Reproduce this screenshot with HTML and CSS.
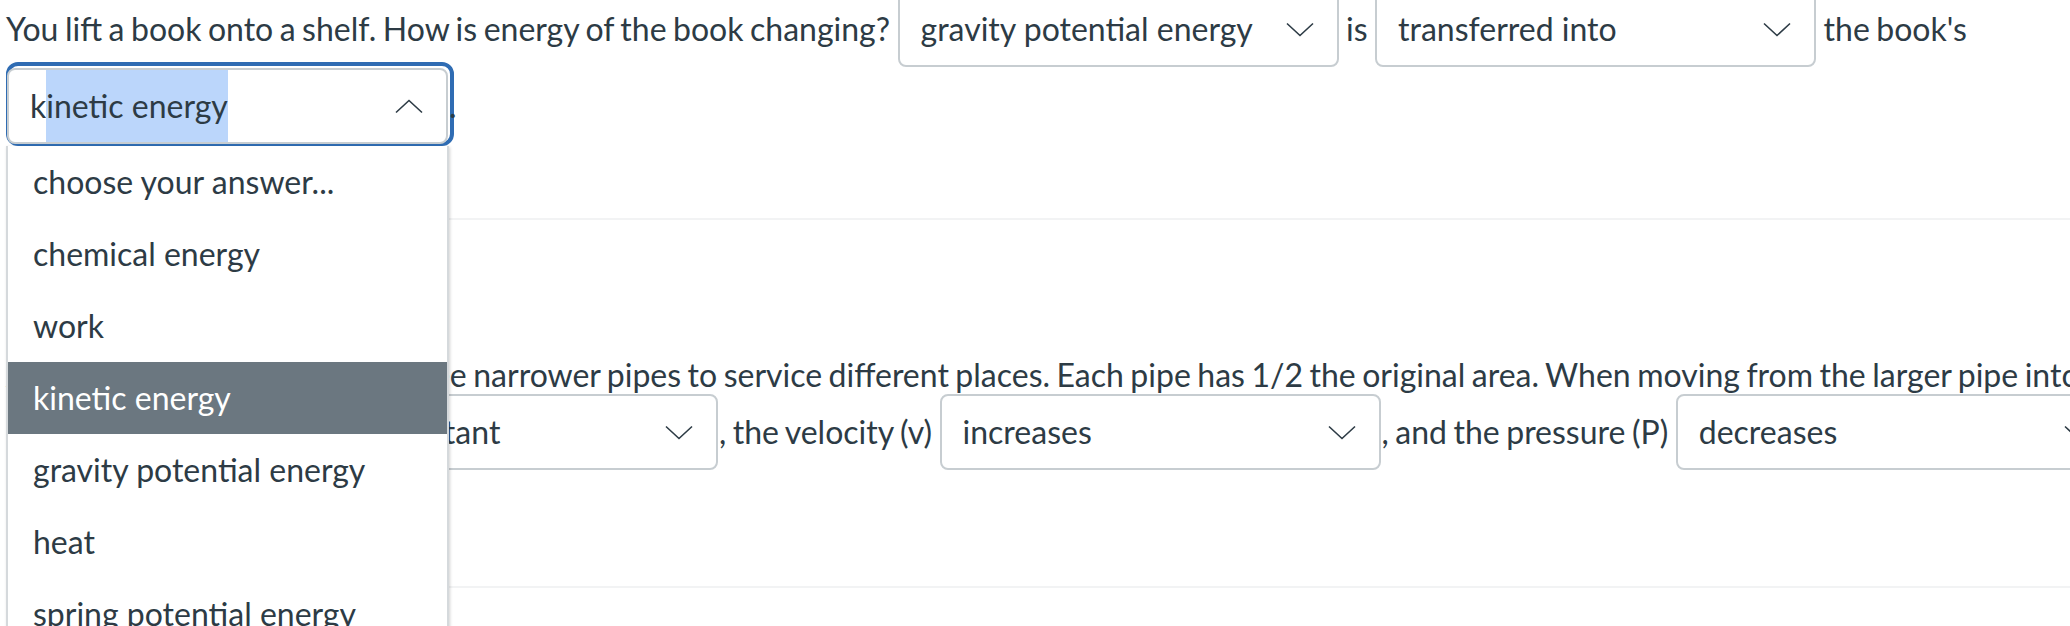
FILE: index.html
```html
<!DOCTYPE html>
<html lang="en">
<head>
<meta charset="utf-8">
<title>Quiz</title>
<link rel="stylesheet" href="styles.css">
</head>
<body>
<div class="page">
  <div class="question q1">
    <div class="qtext">You lift a book onto a shelf. How is energy of the book changing? <div class="select"><span class="value">gravity potential energy</span><svg class="chev" viewBox="0 0 28 15" width="28" height="15"><polyline points="1,1.5 14,13.5 27,1.5"/></svg></div> is <div class="select"><span class="value">transferred into</span><svg class="chev" viewBox="0 0 28 15" width="28" height="15"><polyline points="1,1.5 14,13.5 27,1.5"/></svg></div> the book's <div class="select focused"><span class="value">k<span class="hl">inetic energy</span></span><svg class="chev" viewBox="0 0 28 15" width="28" height="15"><polyline points="1,13.5 14,1.5 27,13.5"/></svg><ul class="listbox">
          <li>choose your answer...</li>
          <li>chemical energy</li>
          <li>work</li>
          <li class="active">kinetic energy</li>
          <li>gravity potential energy</li>
          <li>heat</li>
          <li>spring potential energy</li>
          <li>electrical energy</li>
        </ul></div>.</div>
  </div>
  <div class="question q2">
    <div class="qtext">A long water pipe splits into three narrower pipes to service different places. Each pipe has 1/2 the original area. When moving from the larger pipe into one,<br>this rate of flow (Q) <div class="select"><span class="value">stays constant</span><svg class="chev" viewBox="0 0 28 15" width="28" height="15"><polyline points="1,1.5 14,13.5 27,1.5"/></svg></div>, the velocity (v) <div class="select"><span class="value">increases</span><svg class="chev" viewBox="0 0 28 15" width="28" height="15"><polyline points="1,1.5 14,13.5 27,1.5"/></svg></div>, and the pressure (P) <div class="select"><span class="value">decreases</span><svg class="chev" viewBox="0 0 28 15" width="28" height="15"><polyline points="1,1.5 14,13.5 27,1.5"/></svg></div>.</div>
  </div>
</div>
</body>
</html>
```

FILE: styles.css
```css
html {
  height: 100%;
  background: #fff;
}

html, body {
  margin: 0;
  padding: 0;
  overflow: hidden;
}

body {
  min-height: 100%;
  font-family: "Lato", "Noto Sans", sans-serif;
  font-size: 32px;
  word-spacing: -1.7px;
  color: #2d3b45;
}

.page {
  width: 2400px;
  margin-top: -10px;
  padding-left: 6px;
}

.question {
  border-bottom: 2px solid #f2f3f4;
}

.q1 {
  width: 2300px;
  padding-bottom: 74px;
}

.q2 {
  padding-top: 137px;
  padding-bottom: 116px;
}

.qtext {
  line-height: 36px;
}

.select {
  position: relative;
  display: inline-flex;
  align-items: center;
  justify-content: space-between;
  box-sizing: border-box;
  width: 441px;
  height: 76px;
  margin: 1px 1px 0;
  padding: 0 23px 0 21px;
  border: 2px solid #c7cdd1;
  border-radius: 8px;
  background: #fff;
  vertical-align: baseline;
  word-spacing: normal;
}

.value {
  line-height: 40px;
  white-space: nowrap;
}

.chev {
  flex: none;
  fill: none;
  stroke: #2d3b45;
  stroke-width: 1.6;
}

.focused::before {
  content: "";
  position: absolute;
  left: -3px;
  top: -8px;
  right: -8px;
  bottom: -4px;
  border: 4px solid #2f6cb3;
  border-radius: 12px;
  z-index: -1;
}

.hl {
  display: inline-block;
  line-height: 72px;
  background: #bbd6fb;
}

.listbox {
  position: absolute;
  left: -3px;
  top: 76px;
  z-index: 5;
  box-sizing: border-box;
  width: 443px;
  margin: 0;
  padding: 0;
  list-style: none;
  background: #fff;
  border: 2px solid #d5d9dc;
  border-top: 0;
  box-shadow: 1px 1px 3px rgba(0, 0, 0, 0.18);
  line-height: 72px;
}

.listbox li {
  padding-left: 25px;
  white-space: nowrap;
}

.listbox .active {
  background: #6b7780;
  color: #fff;
}
```
